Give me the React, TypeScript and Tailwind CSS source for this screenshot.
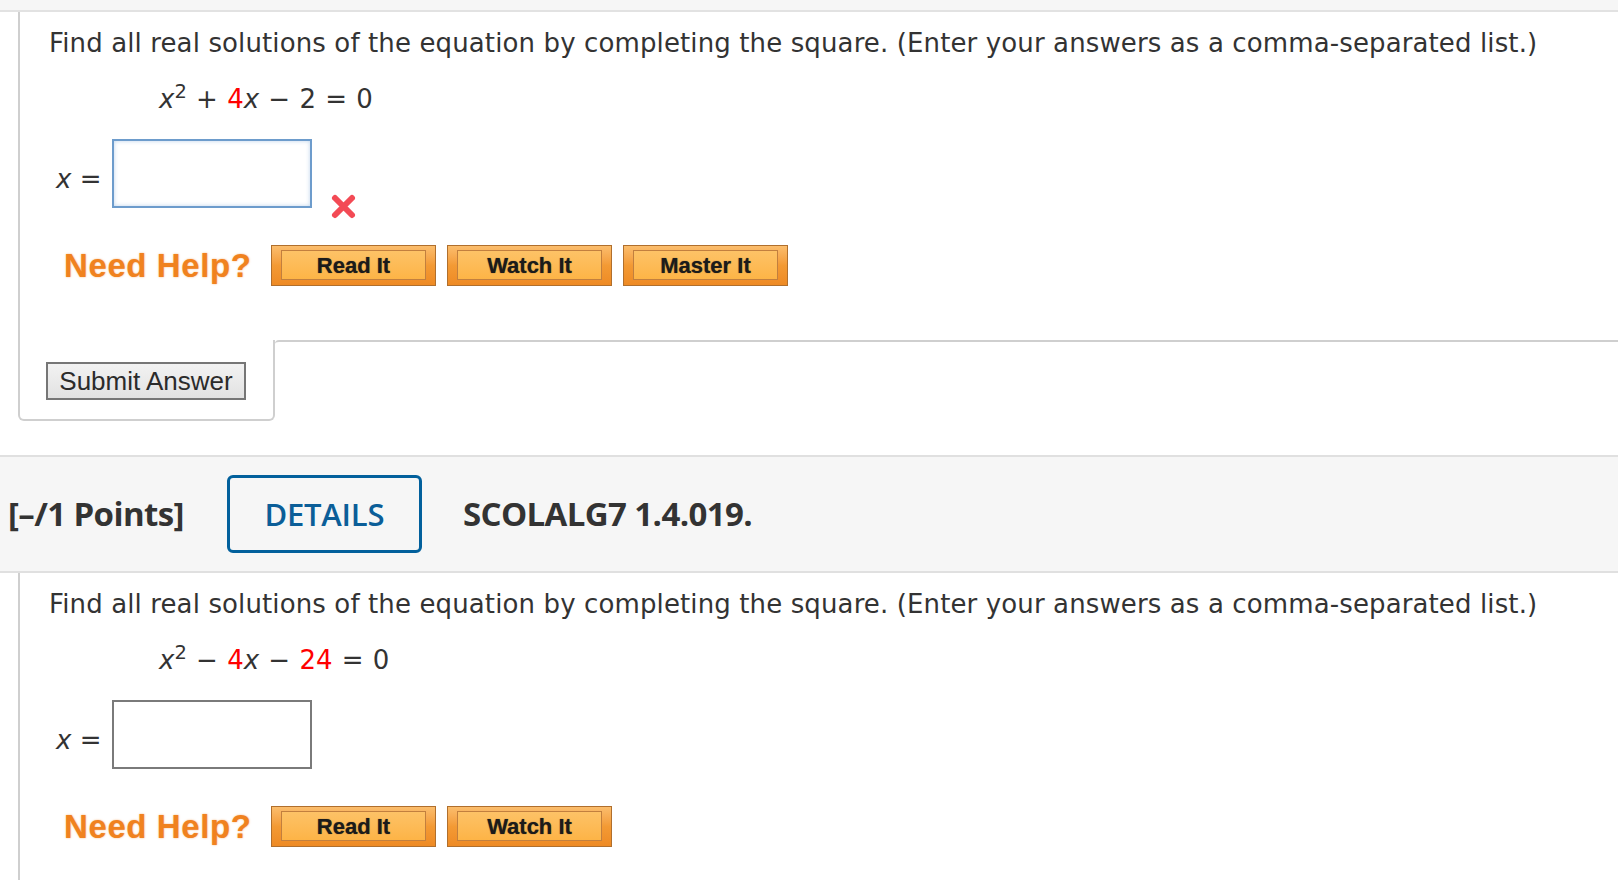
import type { ReactNode } from "react";

const PROMPT =
  "Find all real solutions of the equation by completing the square. (Enter your answers as a comma-separated list.)";

function HelpButton({ label }: { label: string }) {
  return (
    <div className="h-[41px] w-[165px] border border-[#b06f2d] bg-gradient-to-b from-[#fbbd6c] via-[#f39a34] to-[#ee8a24] px-[9px] pt-[4px] pb-[5px]">
      <div className="flex h-full items-center justify-center border border-[#c27f3e] bg-gradient-to-b from-[#fdc266] to-[#fdb446] font-['Liberation_Sans',Arial,sans-serif] text-[22px] font-bold text-[#1b1b1b] [text-shadow:0_0_1px_rgba(0,0,0,0.6)]">
        {label}
      </div>
    </div>
  );
}

function RedX() {
  return (
    <svg width="27" height="27" viewBox="0 0 27 27" className="block blur-[0.4px]">
      <path d="M5 5 L22 22 M22 5 L5 22" stroke="#f34a55" strokeWidth="6" strokeLinecap="round" />
    </svg>
  );
}

function Question({
  equation,
  focused,
  wrong,
  buttons,
}: {
  equation: ReactNode;
  focused?: boolean;
  wrong?: boolean;
  buttons: string[];
}) {
  return (
    <div className="ml-[18px] border-l-2 border-[#cfcfcf] pl-[29px] pt-[16px] font-['DejaVu_Sans',Verdana,sans-serif] text-[#333]">
      <p className="text-[26px] leading-[30px] tracking-[0.12px] whitespace-nowrap">{PROMPT}</p>
      <div className="mt-[26px] pl-[110px] text-[26px] leading-[30px] [word-spacing:1px]">{equation}</div>
      <div className="mt-[25px] flex h-[69px] items-start">
        <span className="mt-[25px] w-[63px] pl-[7px] text-[26px] leading-[30px]">
          <i>x</i> =
        </span>
        <div
          className={
            focused
              ? "h-[69px] w-[200px] border-2 border-[#6d9ccc] bg-white shadow-[inset_0_0_4px_rgba(110,160,210,0.45)]"
              : "h-[69px] w-[200px] border-2 border-[#7a7a7a] bg-white"
          }
        />
        {wrong ? (
          <div className="ml-[18px] mt-[54px]">
            <RedX />
          </div>
        ) : null}
      </div>
      <div className="mt-[37px] flex h-[41px] items-center">
        <span className="w-[222px] pl-[15px] font-['Liberation_Sans',Arial,sans-serif] text-[33px] leading-[41px] font-bold tracking-[0.6px] text-[#f0821f] [text-shadow:0_0_2px_rgba(240,130,31,0.6)]">
          Need Help?
        </span>
        <div className="flex gap-[11px]">
          {buttons.map((b) => (
            <HelpButton key={b} label={b} />
          ))}
        </div>
      </div>
    </div>
  );
}

export default function App() {
  return (
    <div className="h-[880px] w-[1618px] overflow-hidden bg-white">
      <div className="h-[12px] border-b-2 border-[#e2e2e2] bg-[#f6f6f6]" />

      <Question
        focused
        wrong
        buttons={["Read It", "Watch It", "Master It"]}
        equation={
          <>
            <i>x</i>
            <sup>2</sup> + <span className="text-[#ff0000]">4</span>
            <i>x</i> − 2 = 0
          </>
        }
      />
      <div className="ml-[18px] h-[54px] border-l-2 border-[#cfcfcf]" />

      <div className="flex">
        <div className="ml-[18px] h-[81px] w-[257px] rounded-b-[6px] border-x-2 border-b-2 border-[#cfcfcf] pl-[26px] pt-[22px]">
          <button className="h-[38px] w-[200px] border-2 border-[#767676] bg-gradient-to-b from-[#f2f2f2] to-[#e2e2e2] font-['Liberation_Sans',Arial,sans-serif] text-[26px] leading-[34px] text-[#2b2b2b]">
            Submit Answer
          </button>
        </div>
        <div className="flex-1 rounded-tl-[4px] border-t-2 border-[#cfcfcf]" />
      </div>

      <div className="mt-[34px] flex h-[118px] items-center border-y-2 border-[#e0e0e0] bg-[#f6f6f6] font-['Open_Sans',sans-serif] text-[#333]">
        <span className="pl-[8px] text-[33px] font-bold tracking-[-0.6px]">[–/1 Points]</span>
        <div className="ml-[43px] flex h-[78px] w-[195px] items-center justify-center rounded-[6px] border-[3px] border-[#02609c] text-[31px] font-semibold tracking-[-0.2px] text-[#0b5e98]">
          DETAILS
        </div>
        <span className="ml-[41px] text-[33px] font-bold tracking-[-0.6px]">SCOLALG7 1.4.019.</span>
      </div>

      <Question
        buttons={["Read It", "Watch It"]}
        equation={
          <>
            <i>x</i>
            <sup>2</sup> − <span className="text-[#ff0000]">4</span>
            <i>x</i> − <span className="text-[#ff0000]">24</span> = 0
          </>
        }
      />
      <div className="ml-[18px] h-[200px] border-l-2 border-[#cfcfcf]" />
    </div>
  );
}
